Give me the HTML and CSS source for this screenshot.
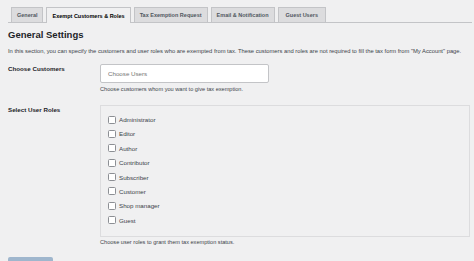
FILE: index.html
```html
<!DOCTYPE html>
<html lang="en">
<head>
  <meta charset="UTF-8">
  <title>Tax Exemption Settings</title>
  <link rel="stylesheet" href="styles.css">
</head>
<body>
  <div class="wrap">
    <nav class="tabs">
      <a class="tab">General</a>
      <a class="tab active">Exempt Customers &amp; Roles</a>
      <a class="tab">Tax Exemption Request</a>
      <a class="tab">Email &amp; Notification</a>
      <a class="tab">Guest Users</a>
    </nav>

    <h2>General Settings</h2>
    <p class="intro">In this section, you can specify the customers and user roles who are exempted from tax. These customers and roles are not required to fill the tax form from "My Account" page.</p>

    <div class="row">
      <label class="row-label">Choose Customers</label>
      <div class="row-field">
        <div class="select-box">Choose Users</div>
        <p class="help">Choose customers whom you want to give tax exemption.</p>
      </div>
    </div>

    <div class="row roles-row">
      <label class="row-label">Select User Roles</label>
      <div class="row-field">
        <div class="roles">
          <label class="role"><span class="check"></span>Administrator</label>
          <label class="role"><span class="check"></span>Editor</label>
          <label class="role"><span class="check"></span>Author</label>
          <label class="role"><span class="check"></span>Contributor</label>
          <label class="role"><span class="check"></span>Subscriber</label>
          <label class="role"><span class="check"></span>Customer</label>
          <label class="role"><span class="check"></span>Shop manager</label>
          <label class="role"><span class="check"></span>Guest</label>
        </div>
        <p class="help">Choose user roles to grant them tax exemption status.</p>
      </div>
    </div>

    <button class="save" aria-label="Save Changes"></button>
  </div>
</body>
</html>
```

FILE: styles.css
```css
/* Page */
body {
  margin: 0;
  background-color: #f0f0f1;
  color: #1d2327;
  font-family: "Liberation Sans", Arial, sans-serif;
  overflow: hidden;
}

.wrap {
  padding: 7px 2px 0 8px;
}

/* Tabs */
.tabs {
  display: flex;
  gap: 3px;
  padding-left: 3px;
  border-bottom: 1px solid #c3c4c7;
  height: 15px;
}

.tab {
  display: flex;
  align-items: center;
  padding: 0 5px;
  height: 14px;
  background-color: #dcdcde;
  border: 1px solid #c3c4c7;
  border-bottom: none;
  color: #50575e;
  font-size: 5.5px;
  font-weight: bold;
}

.tab:last-child {
  padding: 0 7px;
}

.tab.active {
  background-color: #f0f0f1;
  color: #000;
  height: 15px;
  margin-bottom: -1px;
}

h2 {
  margin: 6px 0 0;
  font-size: 9.5px;
  color: #1d2327;
}

.intro {
  margin: 8px 0 0;
  font-size: 5.8px;
  color: #3c434a;
}

/* Form rows */
.row {
  display: flex;
  margin-top: 10px;
}

.roles-row {
  margin-top: 13px;
}

.row-label {
  width: 92px;
  flex-shrink: 0;
  font-size: 6.2px;
  font-weight: bold;
  padding-top: 1px;
}

.row-field {
  flex: 1;
}

.select-box {
  width: 160px;
  height: 17px;
  padding-left: 7px;
  display: flex;
  align-items: center;
  background-color: #fff;
  border: 1px solid #c3c4c7;
  border-radius: 2px;
  font-size: 6.2px;
  color: #757575;
}

.help {
  margin: 3px 0 0;
  font-size: 5.6px;
  color: #3c434a;
}

.roles {
  width: 370px;
  height: 132px;
  border: 1px solid #dcdcde;
  box-sizing: border-box;
  padding: 10px 0 0 7px;
  display: flex;
  flex-direction: column;
  gap: 7.4px;
}

.roles + .help {
  margin-top: 2px;
}

.role {
  display: flex;
  align-items: center;
  gap: 3px;
  font-size: 6.2px;
  color: #3c434a;
  height: 7px;
}

.check {
  width: 6px;
  height: 6px;
  border: 1px solid #8c8f94;
  border-radius: 1.5px;
  background-color: #fff;
}

.save {
  display: block;
  margin-top: 12px;
  width: 45px;
  height: 14px;
  border: none;
  border-radius: 2px;
  background-color: #9fb6cd;
}
```
